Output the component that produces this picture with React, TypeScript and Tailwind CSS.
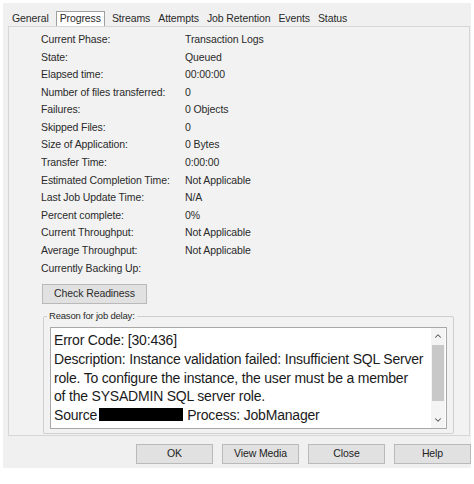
import { ChevronUp, ChevronDown } from 'lucide-react';

const rows: [string, string][] = [
  ['Current Phase:', 'Transaction Logs'],
  ['State:', 'Queued'],
  ['Elapsed time:', '00:00:00'],
  ['Number of files transferred:', '0'],
  ['Failures:', '0 Objects'],
  ['Skipped Files:', '0'],
  ['Size of Application:', '0 Bytes'],
  ['Transfer Time:', '0:00:00'],
  ['Estimated Completion Time:', 'Not Applicable'],
  ['Last Job Update Time:', 'N/A'],
  ['Percent complete:', '0%'],
  ['Current Throughput:', 'Not Applicable'],
  ['Average Throughput:', 'Not Applicable'],
  ['Currently Backing Up:', ''],
];

const tabs = ['General', 'Progress', 'Streams', 'Attempts', 'Job Retention', 'Events', 'Status'];

function DlgButton({ label }: { label: string }) {
  return (
    <button className="w-[77px] h-[20px] bg-[#e1e1e1] border border-[#b9b9b9] text-[10.5px] tracking-[-0.1px] text-[#222]">
      {label}
    </button>
  );
}

export default function App() {
  return (
    <div className="w-[474px] h-[484px] bg-white pt-[3px] pl-[3px] font-['Liberation_Sans',Arial,sans-serif] text-[#2a2a2a]">
      <div className="w-[468px] h-[465px] bg-[#f0f0f0] flex flex-col">
        {/* Tabs */}
        <div className="flex items-end h-[23px] pl-[5px] text-[10.5px] tracking-[-0.1px]">
          {tabs.map((t) =>
            t === 'Progress' ? (
              <div key={t} className="px-[3px] h-[16px] flex items-center border border-[#a0a0a0] bg-white mx-[3px] mb-[-1px]">
                {t}
              </div>
            ) : (
              <div key={t} className="px-[4px] h-[15px] flex items-center">
                {t}
              </div>
            )
          )}
        </div>

        {/* Panel */}
        <div className="ml-[5px] w-[462px] h-[410px] border border-[#d6d6d6] bg-[#f2f2f2] flex flex-col">
          <div className="pl-[32px] pt-[4px] flex flex-col text-[10.5px] tracking-[-0.1px]">
            {rows.map(([k, v]) => (
              <div key={k} className="flex h-[17.6px] items-center">
                <div className="w-[144px]">{k}</div>
                <div>{v}</div>
              </div>
            ))}
          </div>

          <div className="pl-[33px] mt-[3px]">
            <button className="w-[105px] h-[20px] bg-[#e1e1e1] border border-[#b9b9b9] text-[10.5px] tracking-[-0.1px]">
              Check Readiness
            </button>
          </div>

          {/* Group box */}
          <div className="relative ml-[34px] mt-[12px] w-[411px] h-[118px] border border-[#cfcfcf] rounded-[2px]">
            <div className="absolute -top-[7px] left-[3px] px-[2px] bg-[#f2f2f2] text-[9.5px] tracking-[-0.2px] leading-[12px]">
              Reason for job delay:
            </div>
            <div className="mt-[10px] ml-[6px] w-[397px] h-[102px] border border-[#a8a8a8] bg-white flex">
              <div className="flex-1 pl-[3px] pt-[3px] text-[14px] leading-[18.6px] text-[#1a1a1a] tracking-[-0.2px]">
                <div>Error Code: [30:436]</div>
                <div>Description: Instance validation failed: Insufficient SQL Server</div>
                <div>role. To configure the instance, the user must be a member</div>
                <div>of the SYSADMIN SQL server role.</div>
                <div className="flex items-center">
                  <span>Source</span>
                  <span className="inline-block w-[84px] h-[13px] bg-black ml-[2px] mr-[4px]" />
                  <span>Process: JobManager</span>
                </div>
              </div>
              <div className="w-[14px] mr-[1px] flex flex-col items-center bg-[#f4f4f4]">
                <ChevronUp size={10} strokeWidth={2.5} className="text-[#555] mt-[3px]" />
                <div className="w-[12px] h-[56px] bg-[#c8c8c8] mt-[4px]" />
                <div className="flex-1" />
                <ChevronDown size={10} strokeWidth={2.5} className="text-[#555] mb-[3px]" />
              </div>
            </div>
          </div>
        </div>

        {/* Bottom buttons */}
        <div className="flex justify-end gap-[9px] mt-[8px]">
          <DlgButton label="OK" />
          <DlgButton label="View Media" />
          <DlgButton label="Close" />
          <DlgButton label="Help" />
        </div>
      </div>
    </div>
  );
}
